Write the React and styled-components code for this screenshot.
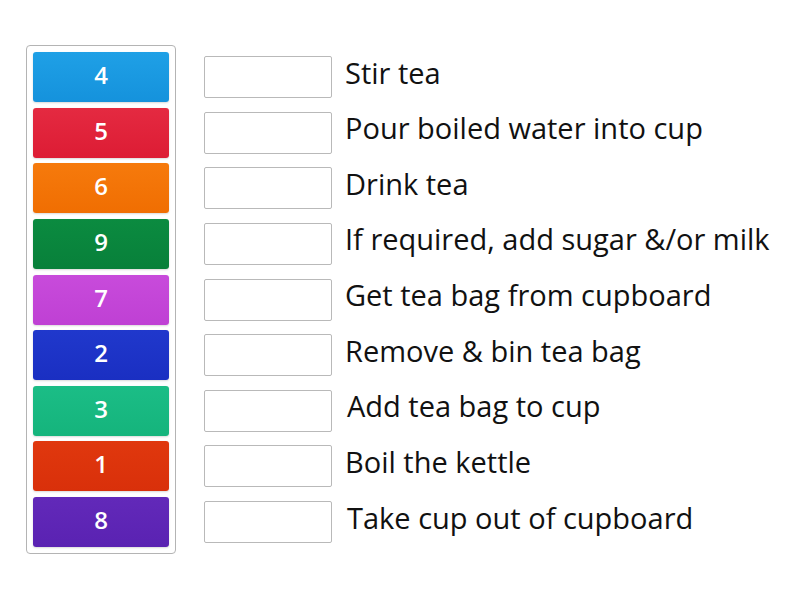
import React from "react";
import styled, { createGlobalStyle } from "styled-components";

const GlobalStyle = createGlobalStyle`
  html, body {
    margin: 0;
    padding: 0;
    background: #ffffff;
    font-family: "Open Sans", "Liberation Sans", sans-serif;
  }
`;

const Page = styled.div`
  display: flex;
  align-items: flex-start;
  gap: 28px;
  padding: 45px 0 0 26px;
  width: 800px;
  height: 600px;
  box-sizing: border-box;
`;

const TilePanel = styled.div`
  display: grid;
  grid-auto-rows: 50px;
  row-gap: 5.625px;
  width: 150px;
  padding: 6px;
  box-sizing: border-box;
  border: 1px solid #b4b4b4;
  border-radius: 4px;
`;

const Tile = styled.div`
  display: flex;
  align-items: center;
  justify-content: center;
  border-radius: 3px;
  background: linear-gradient(180deg, ${p => p.$light} 0%, ${p => p.$color} 100%);
  box-shadow: 0 1px 2px rgba(0, 0, 0, 0.15);
  color: #ffffff;
  font-size: 24px;
  font-weight: 600;
  padding-bottom: 5px;
  box-sizing: border-box;
`;

const Answers = styled.div`
  display: grid;
  grid-auto-rows: 50px;
  row-gap: 5.625px;
  padding-top: 7px;
`;

const AnswerRow = styled.div`
  display: flex;
  align-items: center;
  gap: 13px;
`;

const DropBox = styled.div`
  width: 128px;
  height: 42px;
  box-sizing: border-box;
  border: 1px solid #b9b9b9;
  border-radius: 2px;
  background: #ffffff;
  flex-shrink: 0;
`;

const Label = styled.span`
  font-size: 29px;
  color: #111111;
  white-space: nowrap;
  padding-bottom: 10px;
  margin-left: ${p => p.$indent || 0}px;
`;

const tiles = [
  { n: 4, color: "#1592dc", light: "#1fa0e6" },
  { n: 5, color: "#dd1c34", light: "#e42a41" },
  { n: 6, color: "#f06e02", light: "#f67a0c" },
  { n: 9, color: "#08803a", light: "#0b8b40" },
  { n: 7, color: "#bf40d4", light: "#c84bdb" },
  { n: 2, color: "#1a2fc2", light: "#2038cc" },
  { n: 3, color: "#15b47c", light: "#1bbd86" },
  { n: 1, color: "#d9300a", light: "#e0380e" },
  { n: 8, color: "#5a22b2", light: "#6229b9" },
];

const steps = [
  { text: "Stir tea" },
  { text: "Pour boiled water into cup" },
  { text: "Drink tea" },
  { text: "If required, add sugar &/or milk" },
  { text: "Get tea bag from cupboard" },
  { text: "Remove & bin tea bag" },
  { text: "Add tea bag to cup", indent: 2 },
  { text: "Boil the kettle" },
  { text: "Take cup out of cupboard", indent: 2 },
];

const App = () => (
  <>
    <GlobalStyle />
    <Page>
      <TilePanel>
        {tiles.map(tile => (
          <Tile key={tile.n} $color={tile.color} $light={tile.light}>
            {tile.n}
          </Tile>
        ))}
      </TilePanel>
      <Answers>
        {steps.map(step => (
          <AnswerRow key={step.text}>
            <DropBox />
            <Label $indent={step.indent}>{step.text}</Label>
          </AnswerRow>
        ))}
      </Answers>
    </Page>
  </>
);

export default App;
